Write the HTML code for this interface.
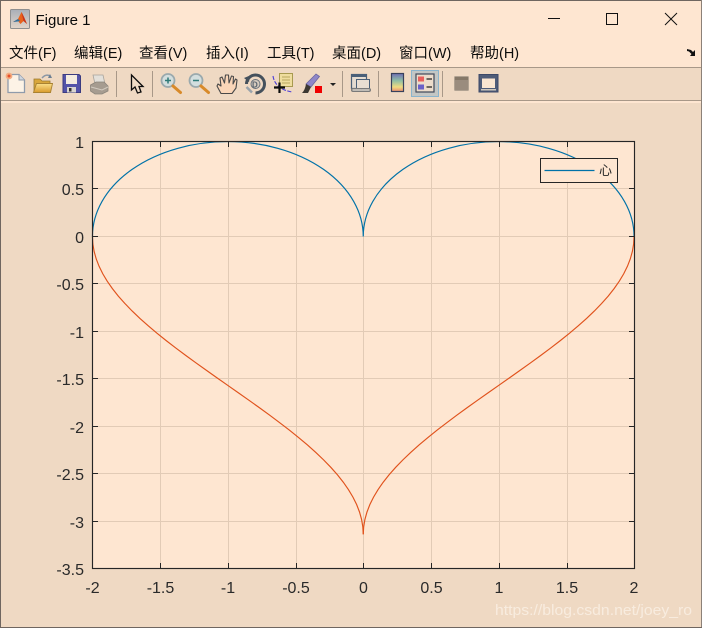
<!DOCTYPE html>
<html><head><meta charset="utf-8"><style>
html,body{margin:0;padding:0;width:702px;height:628px;overflow:hidden;background:#efd9c3}
svg{display:block;position:absolute;left:0;top:0}
.m{font-family:"Liberation Sans","Noto Sans CJK SC",sans-serif;font-size:14.5px;fill:#0c0c0c}
.t{font-family:"Liberation Sans",sans-serif;font-size:16px;fill:#2a2a2a}
</style></head><body>
<svg width="702" height="628" viewBox="0 0 702 628" xmlns="http://www.w3.org/2000/svg">
<defs>
<linearGradient id="cb" x1="0" y1="0" x2="0" y2="1"><stop offset="0" stop-color="#6f6fb5"/><stop offset=".4" stop-color="#8fbfa5"/><stop offset=".75" stop-color="#f0dc80"/><stop offset="1" stop-color="#e88a70"/></linearGradient>
<linearGradient id="fo" x1="0" y1="0" x2="0" y2="1"><stop offset="0" stop-color="#fbe08a"/><stop offset="1" stop-color="#d99a2c"/></linearGradient>
<linearGradient id="ic" x1="0" y1="0" x2="0" y2="1"><stop offset="0" stop-color="#a9afb8"/><stop offset="1" stop-color="#e2d5c9"/></linearGradient>
<filter id="soft" x="-5%" y="-5%" width="110%" height="110%"><feGaussianBlur stdDeviation="0.35"/></filter>
</defs>
<!-- chrome -->
<rect x="0" y="0" width="702" height="68" fill="#fee6d1"/>
<rect x="0" y="68" width="702" height="32" fill="#efd9c3"/>
<rect x="0" y="100" width="702" height="3" fill="#fee6d1"/>
<rect x="0" y="103" width="702" height="525" fill="#efd9c3"/>
<rect x="0" y="67" width="702" height="1" fill="#a89888"/>
<rect x="0" y="100" width="702" height="1" fill="#a89888"/>
<rect x="0" y="0" width="702" height="1" fill="#6f6660"/>
<rect x="0" y="0" width="1" height="628" fill="#6f6660"/>
<rect x="701" y="0" width="1" height="628" fill="#8c8178"/>
<rect x="0" y="627" width="702" height="1" fill="#6f6660"/>

<g filter="url(#soft)">
<!-- app icon -->
<rect x="10.500" y="9.500" width="19" height="19" rx="1" fill="url(#ic)" stroke="#8f8f8f"/>
<path d="M13 22 L18 19 L21.500 12 L24 17 L27 24 L23.500 21 L20.500 24 L18 21Z" fill="#e8641b"/>
<path d="M13 22 L18 19 L20 21 L18 21.500Z" fill="#2f6f9f"/>
<path d="M21.500 12 L24 17 L27 24 L23.500 21Z" fill="#c9341a"/>
</g>
<text x="35.500" y="25" font-family="Liberation Sans,sans-serif" font-size="15" fill="#0a0a0a">Figure 1</text>

<!-- window buttons -->
<rect x="548" y="18" width="12" height="1" fill="#111"/>
<rect x="606.500" y="13.500" width="11" height="11" fill="none" stroke="#111"/>
<path d="M665 13 L677 25 M677 13 L665 25" stroke="#111" stroke-width="1" fill="none"/>

<!-- menu -->
<text class="m" x="9" y="58">文件(F)</text>
<text class="m" x="74" y="58">编辑(E)</text>
<text class="m" x="139" y="58">查看(V)</text>
<text class="m" x="206" y="58">插入(I)</text>
<text class="m" x="267" y="58">工具(T)</text>
<text class="m" x="332" y="58">桌面(D)</text>
<text class="m" x="399" y="58">窗口(W)</text>
<text class="m" x="470" y="58">帮助(H)</text>
<path d="M687 49 L691 50 L693 52 L695 50 L695 56 L690 56 L691.500 54 L689 51.500 L687 51Z" fill="#111"/>

<!-- toolbar separators -->
<g fill="#a89888">
<rect x="116" y="71" width="1" height="26"/><rect x="152" y="71" width="1" height="26"/>
<rect x="342" y="71" width="1" height="26"/><rect x="378" y="71" width="1" height="26"/>
<rect x="442" y="71" width="1" height="26"/>
</g>

<g filter="url(#soft)">
<!-- new -->
<path d="M8 74.500 H19 L24.500 80 V92.500 H8Z" fill="#fdf3e6" stroke="#8f9bab" stroke-width="1.300"/>
<path d="M19 74.500 V80 H24.500" fill="#cfd6de" stroke="#8f9bab"/>
<circle cx="9" cy="76" r="3.400" fill="#f2ab80"/><circle cx="9" cy="76" r="1.500" fill="#e8502a"/>
<!-- open -->
<path d="M34 79 H40 L42 81 H50 V92 H34Z" fill="#d8a63a" stroke="#9a7a30" stroke-width=".8"/>
<path d="M33.500 92.500 L36.500 83.500 H52.500 L50.500 92.500Z" fill="url(#fo)" stroke="#a98230" stroke-width=".9"/>
<path d="M42 78 Q46 73.500 50 76" fill="none" stroke="#8b97a5" stroke-width="1.500"/>
<path d="M50 74 L52 78 L48 78Z" fill="#6c7f92"/>
<!-- save -->
<path d="M63 74.500 H79 L80.500 76 V92.500 H63Z" fill="#5353a8" stroke="#3a3a80"/>
<rect x="66" y="75" width="11" height="9" fill="#f4ecdf"/>
<rect x="67" y="87" width="9" height="5.500" fill="#d9d5d0"/>
<rect x="69" y="88" width="2.500" height="3.500" fill="#333"/>
<!-- print -->
<path d="M93 75 H103 L105 84 H95Z" fill="#e3e0da" stroke="#a7a39c" stroke-width=".8"/>
<path d="M90.500 85 L96 82 H104 L108 86 V91 L102 94 H95 L90.500 91Z" fill="#a69c90" stroke="#8c857b" stroke-width=".8"/>
<path d="M91 87 L102 90 L108 87" fill="none" stroke="#d3cbc0"/>
<!-- cursor -->
<path d="M131.500 75 V90 L135 87 L137.500 93 L141 92 L139 86.500 L143 86.500Z" fill="#f0dcc6" stroke="#111" stroke-width="1.300"/>
<!-- zoom in -->
<circle cx="168" cy="80.500" r="6.500" fill="#d3dede" stroke="#9aa9ad" stroke-width="1.800"/>
<path d="M165 80.500 H171 M168 77.500 V83.500" stroke="#2e7a78" stroke-width="1.500"/>
<path d="M173 86 L180.500 92.500" stroke="#d88a2a" stroke-width="3" stroke-linecap="round"/>
<!-- zoom out -->
<circle cx="196" cy="80.500" r="6.500" fill="#d3dede" stroke="#9aa9ad" stroke-width="1.800"/>
<path d="M193 80.500 H199" stroke="#2e7a78" stroke-width="1.500"/>
<path d="M201 86 L208.500 92.500" stroke="#d88a2a" stroke-width="3" stroke-linecap="round"/>
<!-- hand -->
<path d="M221 93.500 L217 86 L218 84 L221 86 L220 78 L222 77 L224.500 83 L225.500 75 L228.500 75 L229 83 L231.500 76 L233.500 76.500 L233 84 L235.500 79 L237 80 L236 88 L232 93.500Z" fill="#fad6b8" stroke="#4a4a4a" stroke-width="1.100" stroke-linejoin="round"/>
<!-- rotate -->
<path d="M246.500 84 A9 9 0 1 1 255.500 93" fill="none" stroke="#45515c" stroke-width="3"/>
<path d="M244 78 L250 75.500 L249 82Z" fill="#45515c"/>
<path d="M246.500 87 L252 92.500" stroke="#9aa3ab" stroke-width="2.500"/>
<circle cx="255.500" cy="84" r="4.500" fill="#d5cabd" stroke="#6a737c"/>
<text x="252" y="87.500" font-family="Liberation Sans,sans-serif" font-size="8" font-weight="bold" fill="#5a646e">D</text>
<!-- data cursor -->
<path d="M273 76 Q275 89 292 92" fill="none" stroke="#4a3bd8" stroke-width="1.100" stroke-dasharray="4 1.500"/>
<rect x="279.500" y="73.500" width="13" height="13" fill="#efdd9e" stroke="#a89a50"/>
<path d="M282 77 H290 M282 80 H290 M282 83 H290" stroke="#b8a860"/>
<path d="M274 87.500 H285 M279.500 82.500 V93" stroke="#111" stroke-width="2.200"/>
<!-- brush -->
<path d="M306 84 L316 74 L319.500 76.500 L311 87Z" fill="#8f87c8" stroke="#6a65a0" stroke-width=".8"/>
<path d="M306 84 L311 87 L308 93 L302 93 Q305 90 306 84Z" fill="#3d3830"/>
<rect x="315" y="86" width="7" height="7" fill="#f00000"/>
<path d="M330 83 H336 L333 86Z" fill="#222"/>
<!-- link -->
<rect x="351.500" y="74.500" width="15" height="14" fill="#e4dbd0" stroke="#4a5f78" stroke-width="1.200"/>
<rect x="352" y="74.500" width="15" height="2.500" fill="#4a5f78"/>
<rect x="356.500" y="79.500" width="13" height="10" fill="#e9ded2" stroke="#4a5f78" stroke-width="1"/>
<path d="M353 90 H361 M362 90 H369" stroke="#7a7a7a" stroke-width="4" stroke-linecap="round"/>
<path d="M353 90 H361 M362 90 H369" stroke="#d8d2ca" stroke-width="1.400" stroke-linecap="round"/>
<!-- colorbar -->
<rect x="391.500" y="73.500" width="12" height="18" fill="url(#cb)" stroke="#38405c" stroke-width="1.200"/>
<!-- legend selected -->
<rect x="411.500" y="70.500" width="27" height="26" fill="#c3c6c4" stroke="#8ab4cd" stroke-width="1"/>
<rect x="416" y="74" width="18" height="18" fill="#ecdccb" stroke="#40485a" stroke-width="1.200"/>
<rect x="418" y="76.500" width="6" height="5" fill="#e9605c"/>
<rect x="418" y="84.500" width="6" height="5" fill="#6a60c8"/>
<path d="M426.500 79 H432 M426.500 87 H432" stroke="#222" stroke-width="1.200"/>
<!-- hide plot tools square -->
<rect x="454.500" y="76.500" width="14" height="14" rx="1" fill="#9a8c7e" stroke="#b0a292"/>
<rect x="455" y="77" width="13" height="3" fill="#857868"/>
<!-- frame -->
<rect x="479" y="74.500" width="19" height="17.500" fill="#4f5b78"/>
<rect x="482" y="78.500" width="13" height="9.500" fill="#fbe6d1"/>
<rect x="479" y="74.500" width="19" height="17.500" fill="none" stroke="#3e4a68"/>
<rect x="481" y="89" width="15" height="1.500" fill="#cfc7bc"/>
</g>

<!-- axes background -->
<rect x="92.500" y="141.500" width="542" height="427" fill="#fee6d1"/>
<!-- grid -->
<g stroke="#e2cbb6" stroke-width="1" fill="none">
<path d="M160.500 141.500V568.500M228.500 141.500V568.500M296.500 141.500V568.500M363.500 141.500V568.500M431.500 141.500V568.500M499.500 141.500V568.500M567.500 141.500V568.500"/>
<path d="M92.500 188.500H634.500M92.500 236.500H634.500M92.500 283.500H634.500M92.500 331.500H634.500M92.500 378.500H634.500M92.500 426.500H634.500M92.500 473.500H634.500M92.500 521.500H634.500"/>
</g>
<!-- curves -->
<path d="M92.450 236.500 A135.400 94.900 0 0 1 363.250 236.500 A135.400 94.900 0 0 1 634.050 236.500" fill="none" stroke="#0072a8" stroke-width="1.150"/>
<g fill="none" stroke="#e0521c" stroke-width="1.150">
<path d="M363.250 534.320 L363.670 526.880 364.920 519.430 366.990 511.990 369.880 504.540 373.560 497.100 378.010 489.650 383.200 482.210 389.110 474.760 395.690 467.320 402.910 459.870 410.710 452.430 419.060 444.980 427.900 437.540 437.180 430.090 446.840 422.650 456.810 415.200 467.040 407.760 477.470 400.310 488.030 392.870 498.650 385.420 509.270 377.980 519.830 370.530 530.260 363.090 540.490 355.640 550.460 348.200 560.120 340.750 569.400 333.310 578.240 325.860 586.590 318.420 594.390 310.970 601.610 303.530 608.190 296.080 614.100 288.640 619.290 281.190 623.740 273.750 627.420 266.300 630.310 258.860 632.380 251.410 633.630 243.970 634.050 236.520"/>
<path transform="translate(726.500 0) scale(-1 1)" d="M363.250 534.320 L363.670 526.880 364.920 519.430 366.990 511.990 369.880 504.540 373.560 497.100 378.010 489.650 383.200 482.210 389.110 474.760 395.690 467.320 402.910 459.870 410.710 452.430 419.060 444.980 427.900 437.540 437.180 430.090 446.840 422.650 456.810 415.200 467.040 407.760 477.470 400.310 488.030 392.870 498.650 385.420 509.270 377.980 519.830 370.530 530.260 363.090 540.490 355.640 550.460 348.200 560.120 340.750 569.400 333.310 578.240 325.860 586.590 318.420 594.390 310.970 601.610 303.530 608.190 296.080 614.100 288.640 619.290 281.190 623.740 273.750 627.420 266.300 630.310 258.860 632.380 251.410 633.630 243.970 634.050 236.520"/>
</g>
<!-- axes box + ticks -->
<rect x="92.500" y="141.500" width="542" height="427" fill="none" stroke="#262626" stroke-width="1.150"/>
<g stroke="#262626" stroke-width="1" fill="none">
<path d="M160.500 568V563M228.500 568V563M296.500 568V563M363.500 568V563M431.500 568V563M499.500 568V563M567.500 568V563"/>
<path d="M160.500 142V147M228.500 142V147M296.500 142V147M363.500 142V147M431.500 142V147M499.500 142V147M567.500 142V147"/>
<path d="M93 188.500H98M93 236.500H98M93 283.500H98M93 331.500H98M93 378.500H98M93 426.500H98M93 473.500H98M93 521.500H98"/>
<path d="M634 188.500H629M634 236.500H629M634 283.500H629M634 331.500H629M634 378.500H629M634 426.500H629M634 473.500H629M634 521.500H629"/>
</g>
<!-- y labels -->
<g text-anchor="end">
<text class="t" x="84" y="148">1</text>
<text class="t" x="84" y="195">0.5</text>
<text class="t" x="84" y="243">0</text>
<text class="t" x="84" y="290">-0.5</text>
<text class="t" x="84" y="338">-1</text>
<text class="t" x="84" y="385">-1.5</text>
<text class="t" x="84" y="433">-2</text>
<text class="t" x="84" y="480">-2.5</text>
<text class="t" x="84" y="528">-3</text>
<text class="t" x="84" y="575">-3.5</text>
</g>
<!-- x labels -->
<g text-anchor="middle">
<text class="t" x="92.500" y="593">-2</text>
<text class="t" x="160.500" y="593">-1.5</text>
<text class="t" x="228" y="593">-1</text>
<text class="t" x="296" y="593">-0.5</text>
<text class="t" x="363.500" y="593">0</text>
<text class="t" x="431.500" y="593">0.5</text>
<text class="t" x="499" y="593">1</text>
<text class="t" x="567" y="593">1.5</text>
<text class="t" x="634" y="593">2</text>
</g>
<!-- legend -->
<rect x="540.500" y="158.500" width="77" height="24" fill="#fee6d1" stroke="#262626" stroke-width="1"/>
<path d="M544.500 170.500 H594.500" stroke="#0072a8" stroke-width="1.150"/>
<text x="599" y="175" font-family="Liberation Sans,Noto Sans CJK SC,sans-serif" font-size="13" fill="#262626">心</text>
<!-- watermark -->
<text x="495" y="615" font-family="Liberation Sans,sans-serif" font-size="14.500" fill="#f8ecdf" textLength="197" lengthAdjust="spacingAndGlyphs">https://blog.csdn.net/joey_ro</text>
</svg>
</body></html>
